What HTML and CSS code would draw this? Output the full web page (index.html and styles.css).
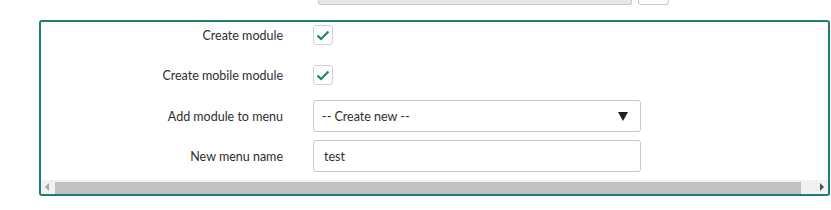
FILE: index.html
```html
<!DOCTYPE html>
<html lang="en">
  <head>
    <meta charset="UTF-8" />
    <meta name="viewport" content="width=device-width, initial-scale=1.0" />
    <title>Module options</title>
    <link rel="stylesheet" href="styles.css">
  </head>
  <body>
    <div class="stub">
      <div class="stub__field"></div>
      <div class="stub__btn"></div>
    </div>

    <div class="panel">
      <div class="form">
        <div class="form__row form__row--first">
          <label class="form__label">Create module</label>
          <span class="check">
            <svg width="14" height="11" viewBox="0 0 14 11">
              <path d="M1.5 5.5 L5 9 L12.5 1.5" fill="none" stroke="#1f7f71" stroke-width="2" />
            </svg>
          </span>
        </div>
        <div class="form__row form__row--second">
          <label class="form__label">Create mobile module</label>
          <span class="check">
            <svg width="14" height="11" viewBox="0 0 14 11">
              <path d="M1.5 5.5 L5 9 L12.5 1.5" fill="none" stroke="#1f7f71" stroke-width="2" />
            </svg>
          </span>
        </div>
        <div class="form__row form__row--third">
          <label class="form__label">Add module to menu</label>
          <div class="select">
            <span>-- Create new --</span>
            <span class="select__arrow"></span>
          </div>
        </div>
        <div class="form__row form__row--fourth">
          <label class="form__label">New menu name</label>
          <div class="input">test</div>
        </div>
      </div>

      <div class="hscroll">
        <span class="hscroll__btn hscroll__btn--left"></span>
        <span class="hscroll__thumb"></span>
        <span class="hscroll__btn hscroll__btn--right"></span>
      </div>
    </div>
  </body>
</html>
```

FILE: styles.css
```css
* {
  margin: 0;
  padding: 0;
  box-sizing: border-box;
}

body {
  font-family: "Lato", "Open Sans", sans-serif;
  font-size: 12.5px;
  color: #2e2e2e;
  background: #fff;
}

.stub {
  display: flex;
  height: 5px;
  padding-left: 318px;
  gap: 6px;
}

.stub__field {
  width: 314px;
  height: 5px;
  background: #e6e7e9;
  border: 1px solid #c9c9c9;
  border-top: none;
  border-radius: 0 0 3px 3px;
}

.stub__btn {
  width: 31px;
  height: 5px;
  border: 1px solid #c9c9c9;
  border-top: none;
  border-radius: 0 0 3px 3px;
}

.panel {
  margin: 15px 0 0 39px;
  width: 791px;
  border: 2px solid #1e7e70;
  border-radius: 3px;
  overflow: hidden;
}

.form {
  display: flex;
  flex-direction: column;
}

.form__row {
  display: flex;
  align-items: center;
  gap: 30px;
}

.form__row--first { margin-top: 3px; }
.form__row--second { margin-top: 20px; }
.form__row--third { margin-top: 15px; }
.form__row--fourth { margin-top: 8px; }

.form__label {
  width: 242px;
  text-align: right;
}

.check {
  display: flex;
  align-items: center;
  justify-content: center;
  width: 20px;
  height: 20px;
  border: 1px solid #cfcfcf;
  border-radius: 3px;
}

.select,
.input {
  width: 328px;
  height: 32px;
  border: 1px solid #c8c8c8;
  border-radius: 3px;
  display: flex;
  align-items: center;
  padding: 0 9px;
}

.select {
  justify-content: space-between;
  padding-left: 8px;
  padding-right: 12px;
}

.select__arrow {
  width: 0;
  height: 0;
  border-left: 5px solid transparent;
  border-right: 5px solid transparent;
  border-top: 9px solid #222;
}

.input {
  padding-left: 10px;
}

.hscroll {
  display: flex;
  align-items: center;
  height: 14px;
  margin-top: 8px;
  background: #f1f1f1;
}

.hscroll__btn {
  width: 14px;
  height: 14px;
  position: relative;
}

.hscroll__btn::after {
  content: "";
  position: absolute;
  top: 3px;
  width: 0;
  height: 0;
  border-top: 4px solid transparent;
  border-bottom: 4px solid transparent;
}

.hscroll__btn--left::after {
  left: 4px;
  border-right: 4px solid #a3a3a3;
}

.hscroll__btn--right::after {
  left: 6px;
  border-left: 4px solid #505050;
}

.hscroll__thumb {
  height: 12px;
  margin-top: 2px;
  width: 746px;
  background: #c1c1c1;
}

.hscroll__btn--right {
  margin-left: auto;
}
```
